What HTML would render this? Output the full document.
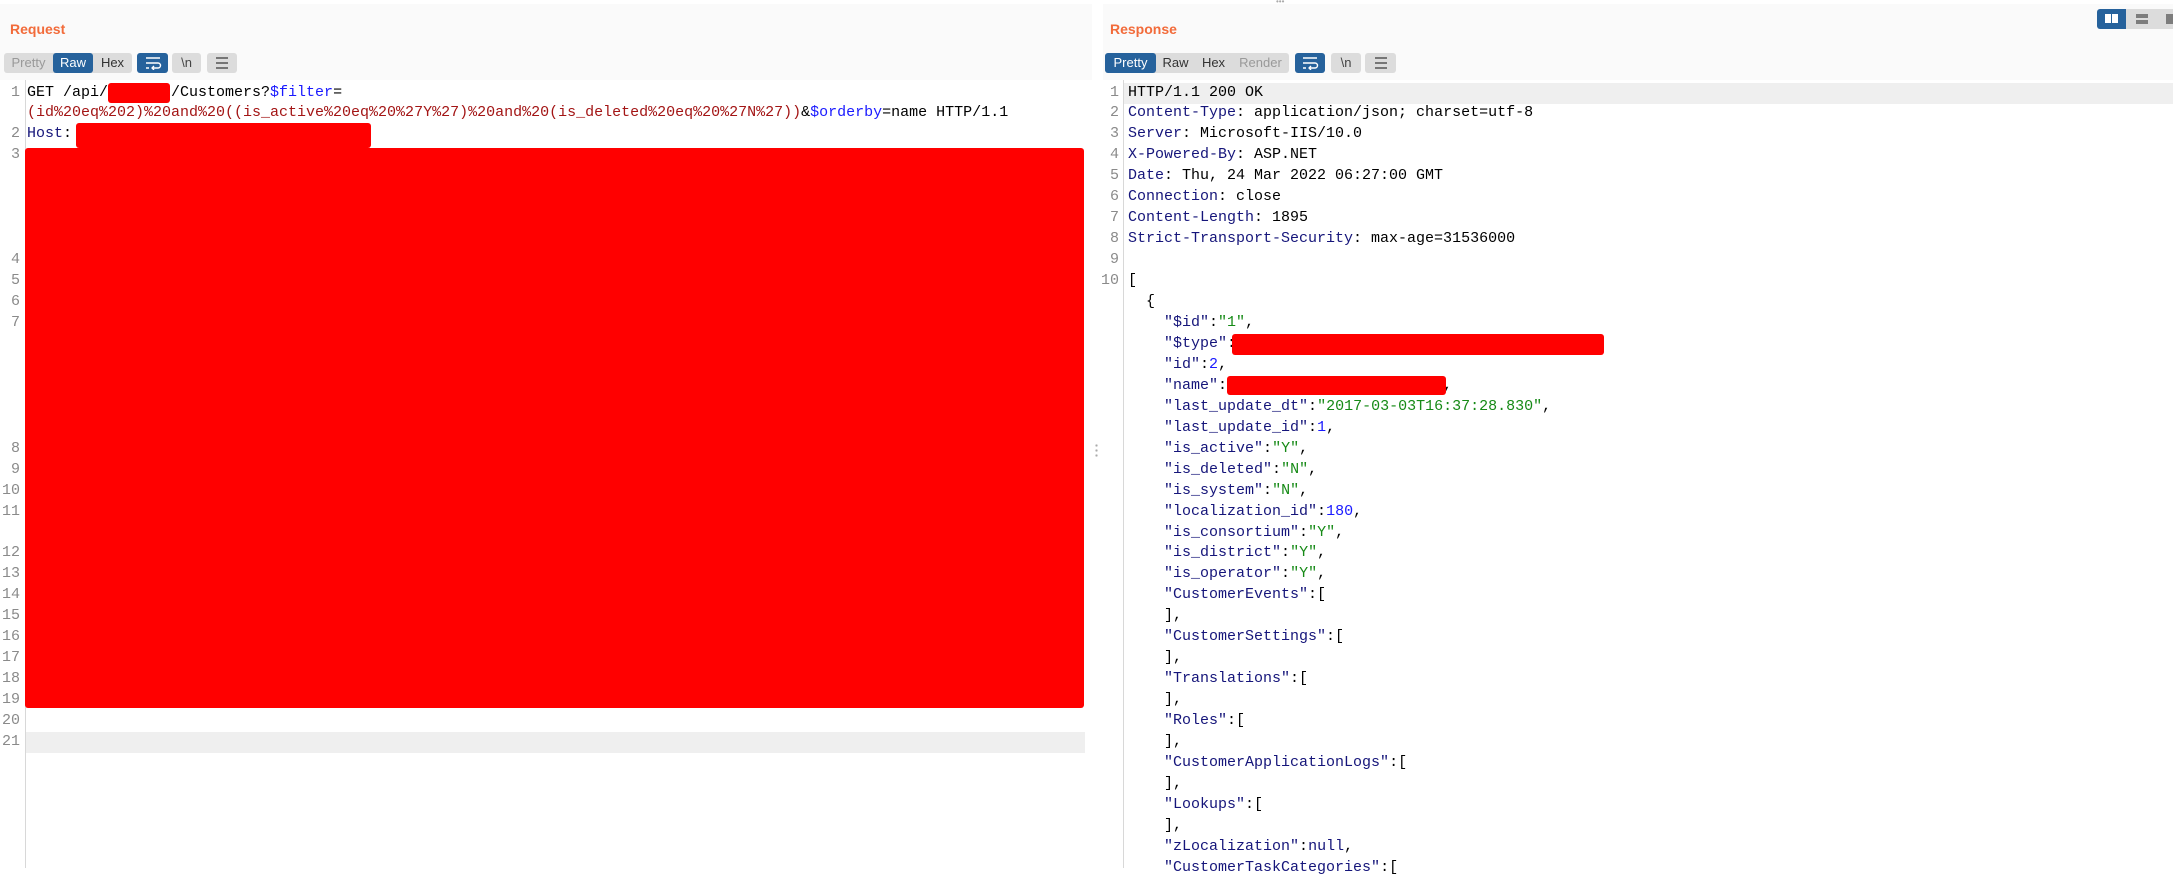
<!DOCTYPE html>
<html><head><meta charset="utf-8"><style>
*{margin:0;padding:0;box-sizing:border-box}
body{width:2173px;height:868px;overflow:hidden;background:#fff;position:relative;font-family:"Liberation Sans",sans-serif}
.hdr{position:absolute;top:4px;height:76px;background:#fafafa}
.title{position:absolute;top:21px;font-size:14px;font-weight:bold;color:#f26b3a}
.grp{position:absolute;top:53px;height:20px;background:#dcdcdc;border-radius:3px;font-size:13px;line-height:20px;color:#333}
.grp span{position:absolute;top:0;height:20px;text-align:center}
.on{background:#26629c;color:#fff;border-radius:3px}
.dis{color:#999}
.ib{position:absolute;top:53px;height:20px;border-radius:3px;background:#dcdcdc;color:#444;font-size:13px;text-align:center;line-height:20px}
.ib.b{background:#26629c;color:#fff}
pre{position:absolute;font-family:"Liberation Mono",monospace;font-size:15px;line-height:20.95px;white-space:pre}
.num{color:#8a8a8a;text-align:right}
.k{color:#15157a}.s{color:#168a16}.n{color:#1a1aff}.r{color:#a31515}.bl{color:#1a1aff}
.red{position:absolute;background:#ff0000;border-radius:3px}
</style></head><body>
<div class="hdr" style="left:0;width:1092px"></div>
<div class="hdr" style="left:1103px;width:1070px"></div>
<div style="position:absolute;left:1276px;top:0;font-size:8px;color:#aaa;line-height:4px">•••</div>
<div class="title" style="left:10px">Request</div>
<div class="title" style="left:1110px">Response</div>

<div class="grp" style="left:4px;width:128px">
<span class="dis" style="left:0;width:49px">Pretty</span><span class="on" style="left:49px;width:40px">Raw</span><span style="left:89px;width:39px">Hex</span></div>
<div class="ib b" style="left:137px;width:31px"><svg width="18" height="14" viewBox="0 0 18 14" style="margin-top:3px"><path d="M2 2h14M2 7h12a2.5 2.5 0 0 1 0 5h-5M2 12h3" stroke="#fff" stroke-width="1.4" fill="none"/><path d="M10 10l-2 2 2 2" stroke="#fff" stroke-width="1.3" fill="none"/></svg></div>
<div class="ib" style="left:172px;width:29px">\n</div>
<div class="ib" style="left:207px;width:30px"><svg width="14" height="12" viewBox="0 0 14 12" style="margin-top:4px"><path d="M1 1h12M1 6h12M1 11h12" stroke="#555" stroke-width="1.4"/></svg></div>

<div class="grp" style="left:1105px;width:184px">
<span class="on" style="left:0;width:51px">Pretty</span><span style="left:51px;width:39px">Raw</span><span style="left:90px;width:37px">Hex</span><span class="dis" style="left:127px;width:57px">Render</span></div>
<div class="ib b" style="left:1295px;width:30px"><svg width="18" height="14" viewBox="0 0 18 14" style="margin-top:3px"><path d="M2 2h14M2 7h12a2.5 2.5 0 0 1 0 5h-5M2 12h3" stroke="#fff" stroke-width="1.4" fill="none"/><path d="M10 10l-2 2 2 2" stroke="#fff" stroke-width="1.3" fill="none"/></svg></div>
<div class="ib" style="left:1331px;width:30px">\n</div>
<div class="ib" style="left:1365px;width:31px"><svg width="14" height="12" viewBox="0 0 14 12" style="margin-top:4px"><path d="M1 1h12M1 6h12M1 11h12" stroke="#555" stroke-width="1.4"/></svg></div>

<div style="position:absolute;left:2097px;top:9px;width:29px;height:20px;background:#26629c;border-radius:3px 0 0 3px"><div style="position:absolute;left:8px;top:5px;width:6px;height:9px;background:#fff"></div><div style="position:absolute;left:15px;top:5px;width:6px;height:9px;background:#fff"></div></div>
<div style="position:absolute;left:2126px;top:9px;width:31px;height:20px;background:#dcdcdc"><div style="position:absolute;left:10px;top:5px;width:12px;height:4px;background:#7d7d7d"></div><div style="position:absolute;left:10px;top:11px;width:12px;height:4px;background:#7d7d7d"></div></div>
<div style="position:absolute;left:2157px;top:9px;width:16px;height:20px;background:#dcdcdc"><div style="position:absolute;left:9px;top:5px;width:7px;height:10px;background:#7d7d7d"></div></div>

<!-- request editor -->
<div style="position:absolute;left:25px;top:80px;width:1px;height:788px;background:#d8d8d8"></div>
<div style="position:absolute;left:26px;top:732px;width:1059px;height:21px;background:#efefef"></div>
<pre class="num" style="left:0;top:82.5px;width:20px">1

2
3




4
5
6
7





8
9
10
11

12
13
14
15
16
17
18
19
20
21</pre>
<pre style="left:27px;top:82.5px">GET /api/       /Customers?<span class="bl">$filter</span>=
<span class="r">(id%20eq%202)%20and%20((is_active%20eq%20%27Y%27)%20and%20(is_deleted%20eq%20%27N%27))</span>&amp;<span class="bl">$orderby</span>=name HTTP/1.1
<span class="k">Host</span>: </pre>
<div class="red" style="left:108px;top:83px;width:62px;height:20px"></div>
<div class="red" style="left:76px;top:123px;width:295px;height:25px"></div>
<div class="red" style="left:25px;top:148px;width:1059px;height:560px"></div>

<!-- divider -->
<div style="position:absolute;left:1092px;top:0;width:11px;height:868px;background:#fff"></div>
<div style="position:absolute;left:1095px;top:443px;width:3px;height:14px;background:radial-gradient(circle,#aaa 1px,transparent 1.3px) 0 0/3px 5px"></div>

<!-- response editor -->
<div style="position:absolute;left:1123px;top:80px;width:1px;height:788px;background:#d8d8d8"></div>
<div style="position:absolute;left:1124px;top:83px;width:1049px;height:21px;background:#efefef"></div>
<pre class="num" style="left:1096px;top:82.5px;width:23px">1
2
3
4
5
6
7
8
9
10</pre>
<pre style="left:1128px;top:82.5px">HTTP/1.1 200 OK
<span class="k">Content-Type</span>: application/json; charset=utf-8
<span class="k">Server</span>: Microsoft-IIS/10.0
<span class="k">X-Powered-By</span>: ASP.NET
<span class="k">Date</span>: Thu, 24 Mar 2022 06:27:00 GMT
<span class="k">Connection</span>: close
<span class="k">Content-Length</span>: 1895
<span class="k">Strict-Transport-Security</span>: max-age=31536000

[
  {
    <span class="k">"$id"</span>:<span class="s">"1"</span>,
    <span class="k">"$type"</span>:
    <span class="k">"id"</span>:<span class="n">2</span>,
    <span class="k">"name"</span>:                        ,
    <span class="k">"last_update_dt"</span>:<span class="s">"2017-03-03T16:37:28.830"</span>,
    <span class="k">"last_update_id"</span>:<span class="n">1</span>,
    <span class="k">"is_active"</span>:<span class="s">"Y"</span>,
    <span class="k">"is_deleted"</span>:<span class="s">"N"</span>,
    <span class="k">"is_system"</span>:<span class="s">"N"</span>,
    <span class="k">"localization_id"</span>:<span class="n">180</span>,
    <span class="k">"is_consortium"</span>:<span class="s">"Y"</span>,
    <span class="k">"is_district"</span>:<span class="s">"Y"</span>,
    <span class="k">"is_operator"</span>:<span class="s">"Y"</span>,
    <span class="k">"CustomerEvents"</span>:[
    ],
    <span class="k">"CustomerSettings"</span>:[
    ],
    <span class="k">"Translations"</span>:[
    ],
    <span class="k">"Roles"</span>:[
    ],
    <span class="k">"CustomerApplicationLogs"</span>:[
    ],
    <span class="k">"Lookups"</span>:[
    ],
    <span class="k">"zLocalization"</span>:<span class="k">null</span>,
    <span class="k">"CustomerTaskCategories"</span>:[</pre>
<div class="red" style="left:1232px;top:334px;width:372px;height:21px"></div>
<div class="red" style="left:1227px;top:376px;width:219px;height:19px"></div>
</body></html>
